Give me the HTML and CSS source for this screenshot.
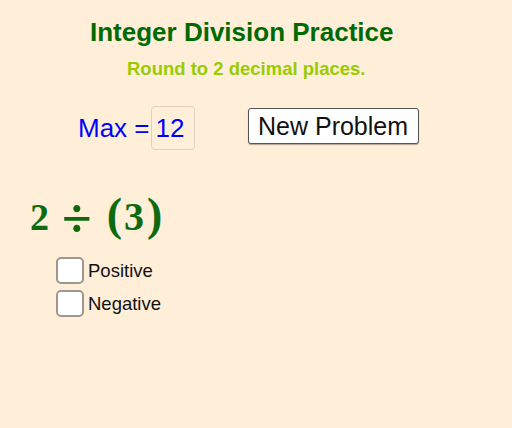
FILE: index.html
```html
<!DOCTYPE html>
<html>
<head>
<meta charset="utf-8">
<link rel="stylesheet" href="styles.css">
</head>
<body>
<div class="app">
  <div class="title">Integer Division Practice</div>
  <div class="subtitle">Round to 2 decimal places.</div>
  <div class="controls">
    <div class="max">
      <span class="max-label">Max =</span>
      <span class="max-input">12</span>
    </div>
    <button class="btn">New Problem</button>
  </div>
  <div class="problem"><span class="num">2</span><span class="div">÷</span><span class="paren lp">(</span><span class="num three">3</span><span class="paren rp">)</span></div>
  <div class="options">
    <label class="opt"><span class="box"></span><span class="opt-text">Positive</span></label>
    <label class="opt"><span class="box"></span><span class="opt-text">Negative</span></label>
  </div>
</div>
</body>
</html>
```
FILE: styles.css
```css
html, body {
  margin: 0;
  padding: 0;
}
body {
  width: 512px;
  height: 428px;
  background: #ffeed8;
  font-family: "Liberation Sans", Arial, sans-serif;
  overflow: hidden;
}
.app {
  display: flex;
  flex-direction: column;
  align-items: flex-start;
}
.title {
  margin: 17px 0 0 90px;
  font-size: 26px;
  line-height: 30px;
  font-weight: bold;
  color: #006a00;
}
.subtitle {
  margin: 11px 0 0 127px;
  font-size: 18.5px;
  line-height: 22px;
  font-weight: bold;
  color: #99cc00;
}
.controls {
  display: flex;
  align-items: center;
  margin: 26px 0 0 78px;
}
.max {
  display: flex;
  align-items: center;
}
.max-label {
  font-size: 26px;
  line-height: 30px;
  color: #0000ff;
}
.max-input {
  box-sizing: border-box;
  width: 44px;
  height: 44px;
  margin-left: 1px;
  padding-left: 4px;
  border: 1px solid #ddd3c4;
  border-radius: 4px;
  font-size: 26px;
  line-height: 42px;
  color: #0000ff;
}
.btn {
  box-sizing: border-box;
  margin: 0 0 4px 53px;
  width: 171px;
  height: 36px;
  padding: 0;
  background: #fff;
  border: 1px solid #555;
  border-radius: 3px;
  box-shadow: 0 1px 1px rgba(0,0,0,0.3);
  font-family: "Liberation Sans", Arial, sans-serif;
  font-size: 25px;
  line-height: 34px;
  color: #111;
}
.problem {
  height: 44px;
  margin: 42px 0 0 30px;
  font-family: "Liberation Serif", "DejaVu Serif", serif;
  font-weight: bold;
  font-size: 38px;
  line-height: 44px;
  color: #0f6a0f;
  white-space: nowrap;
}
.problem span {
  line-height: 1;
}
.num {
  font-size: 38px;
}
.three {
  font-size: 40px;
  margin-left: 2px;
}
.div {
  font-size: 54px;
  margin-left: 13px;
  vertical-align: -7px;
}
.paren {
  font-size: 46px;
}
.lp {
  margin-left: 15px;
}
.rp {
  margin-left: 3px;
}
.options {
  display: flex;
  flex-direction: column;
  gap: 6px;
  margin: 21px 0 0 56px;
}
.opt {
  display: flex;
  align-items: center;
  gap: 4px;
}
.box {
  box-sizing: border-box;
  width: 28px;
  height: 27px;
  background: #fff;
  border: 2px solid #9e9690;
  border-radius: 5px;
}
.opt-text {
  font-size: 18.5px;
  color: #111;
}
```
